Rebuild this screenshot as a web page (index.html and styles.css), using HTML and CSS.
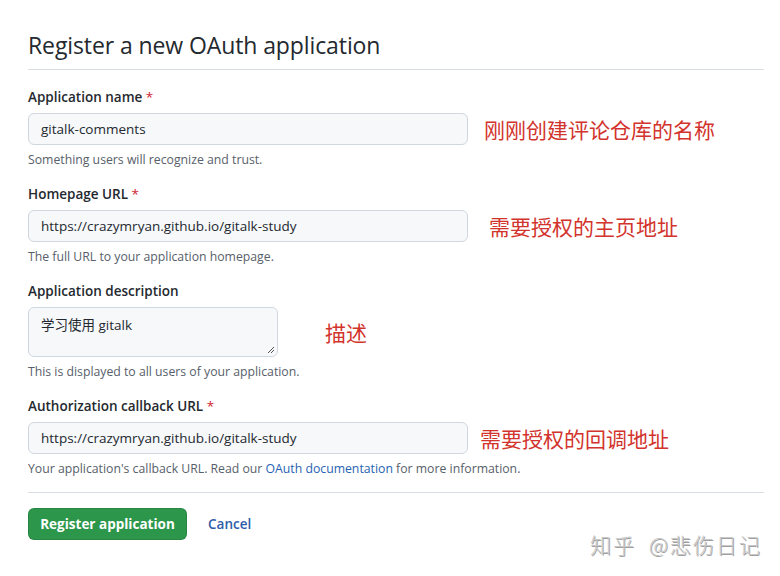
FILE: index.html
```html
<!DOCTYPE html>
<html lang="en">
<head>
<meta charset="utf-8">
<title>Register a new OAuth application</title>
<link rel="stylesheet" href="styles.css">
</head>
<body>
<main class="page">
  <div class="subhead">
    <h1 class="subhead-title">Register a new OAuth application</h1>
  </div>
  <form class="form">
    <div class="field">
      <label class="label">Application name <span class="req">*</span></label>
      <div class="row">
        <div class="input">gitalk-comments</div>
        <span class="note note-1">刚刚创建评论仓库的名称</span>
      </div>
      <p class="hint">Something users will recognize and trust.</p>
    </div>
    <div class="field">
      <label class="label">Homepage URL <span class="req">*</span></label>
      <div class="row">
        <div class="input">https://crazymryan.github.io/gitalk-study</div>
        <span class="note note-2">需要授权的主页地址</span>
      </div>
      <p class="hint">The full URL to your application homepage.</p>
    </div>
    <div class="field">
      <label class="label">Application description</label>
      <div class="row">
        <div class="textarea">学习使用 gitalk
          <svg class="grip" width="8" height="8" viewBox="0 0 8 8"><path d="M7 1 L1 7 M7 4 L4 7" stroke="#555" stroke-width="1"/></svg>
        </div>
        <span class="note note-3">描述</span>
      </div>
      <p class="hint">This is displayed to all users of your application.</p>
    </div>
    <div class="field">
      <label class="label">Authorization callback URL <span class="req">*</span></label>
      <div class="row">
        <div class="input">https://crazymryan.github.io/gitalk-study</div>
        <span class="note note-4">需要授权的回调地址</span>
      </div>
      <p class="hint">Your application's callback URL. Read our <a class="link" href="#">OAuth documentation</a> for more information.</p>
    </div>
    <div class="actions">
      <button type="button" class="btn-primary">Register application</button>
      <a class="cancel" href="#">Cancel</a>
    </div>
  </form>
  <div class="watermark">知乎 @悲伤日记</div>
</main>
</body>
</html>
```

FILE: styles.css
```css
* { box-sizing: border-box; }
html, body {
  margin: 0;
  padding: 0;
  background: #ffffff;
}
body {
  font-family: "Open Sans", "Noto Sans", "Noto Sans CJK SC", sans-serif;
  color: #24292f;
}
.page {
  position: relative;
  width: 780px;
  height: 576px;
  padding: 30px 16px 0 28px;
}
.subhead {
  border-bottom: 1px solid #d8dee4;
  padding-bottom: 8px;
}
.subhead-title {
  margin: 0;
  font-size: 23px;
  font-weight: 400;
  line-height: 31px;
  color: #24292f;
  letter-spacing: -0.1px;
}
.form {
  padding-top: 17px;
}
.field {
  margin-bottom: 15px;
}
.label {
  display: block;
  font-size: 13.5px;
  font-weight: 600;
  line-height: 20px;
  margin-bottom: 6px;
  color: #24292f;
}
.req { color: #cf222e; font-weight: 400; }
.row {
  display: flex;
  align-items: center;
}
.input {
  width: 440px;
  height: 32px;
  border: 1px solid #d0d7de;
  border-radius: 6px;
  background: #f6f8fa;
  padding: 0 12px;
  font-size: 13.5px;
  line-height: 30px;
  color: #24292f;
}
.textarea {
  position: relative;
  width: 250px;
  height: 50px;
  border: 1px solid #d0d7de;
  border-radius: 6px;
  background: #f6f8fa;
  padding: 7px 12px;
  font-size: 13.5px;
  line-height: 20px;
  color: #24292f;
  font-family: "Open Sans", "Noto Sans CJK SC", sans-serif;
}
.grip {
  position: absolute;
  right: 2px;
  bottom: 2px;
}
.note {
  font-family: "Noto Sans CJK SC", sans-serif;
  font-size: 21px;
  line-height: 28px;
  color: #d2332c;
  white-space: nowrap;
}
.note-1 { margin-left: 16px; }
.note-2 { margin-left: 21px; }
.note-3 { margin-left: 47px; }
.note-4 { margin-left: 12px; }
.hint {
  margin: 6px 0 0;
  font-size: 12.25px;
  line-height: 18px;
  color: #57606a;
}
.link {
  color: #2762b0;
  text-decoration: none;
}
.actions {
  margin-top: -1px;
  border-top: 1px solid #d8dee4;
  padding-top: 15px;
  display: flex;
  align-items: center;
  width: 736px;
}
.btn-primary {
  height: 32px;
  width: 159px;
  border: 1px solid rgba(27,31,36,0.15);
  border-radius: 6px;
  background: #2c974b;
  color: #ffffff;
  font-family: "Open Sans", "Noto Sans", sans-serif;
  font-size: 13.5px;
  font-weight: 700;
  padding: 0;
}
.cancel {
  margin-left: 21px;
  font-size: 13.5px;
  font-weight: 600;
  color: #2f5ca8;
  text-decoration: none;
}
.watermark {
  position: absolute;
  left: 590px;
  top: 530px;
  font-family: "Noto Sans CJK SC", sans-serif;
  font-size: 21px;
  font-weight: 300;
  line-height: 28px;
  color: #c8c8c8;
  text-shadow: 1px 1px 0 #a0a0a0;
  letter-spacing: 2px;
  word-spacing: 6px;
  white-space: nowrap;
}
```
